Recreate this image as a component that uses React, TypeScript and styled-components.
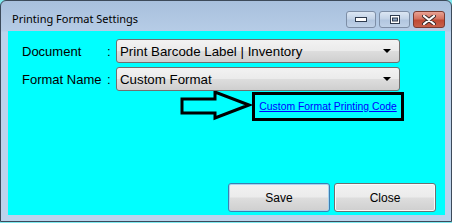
import React from "react";
import styled, { createGlobalStyle } from "styled-components";

const Global = createGlobalStyle`
  html, body { margin: 0; padding: 0; background: #7fe9ef; overflow: hidden; }
  body { width: 452px; height: 223px; }
`;

const Window = styled.div`
  box-sizing: border-box;
  width: 452px;
  height: 222px;
  border: 1px solid #3c4a5a;
  border-radius: 6px 6px 0 0;
  background: linear-gradient(180deg, #a8c0dd 0px, #b6cce6 30px, #bcd3ec 31px, #bcd3ec 100%);
  display: flex;
  flex-direction: column;
  padding: 0 6px 6px 7px;
`;

const TitleBar = styled.div`
  height: 30px;
  display: flex;
  align-items: flex-start;
  justify-content: space-between;
`;

const Title = styled.div`
  font-family: "Noto Sans", sans-serif;
  font-size: 11px;
  color: #000;
  padding: 10px 0 0 4px;
`;

const Controls = styled.div`
  display: flex;
  gap: 3px;
  padding-top: 10px;
`;

const CtlButton = styled.div<{ $w: number; $close?: boolean }>`
  box-sizing: border-box;
  width: ${(p) => p.$w}px;
  height: 17px;
  border: 1px solid ${(p) => (p.$close ? "#7a3a30" : "#7d8ea6")};
  border-radius: 3px;
  background: ${(p) =>
    p.$close
      ? "linear-gradient(180deg, #e8a294 0%, #d4725f 45%, #c04a34 55%, #c7604a 100%)"
      : "linear-gradient(180deg, #dbe6f3 0%, #c3d3e7 45%, #b2c6df 55%, #bfd1e7 100%)"};
  display: flex;
  align-items: center;
  justify-content: center;
`;

const Client = styled.div`
  flex: 1;
  background: #00ffff;
  display: flex;
  flex-direction: column;
  padding: 8px 9px 3px 14px;
  font-family: "Liberation Sans", Arial, sans-serif;
`;

const FormGrid = styled.div`
  display: grid;
  grid-template-columns: 85px 9px 284px;
  row-gap: 4px;
  align-items: center;
`;

const Label = styled.div`
  font-size: 13px;
  color: #000;
`;

const Colon = styled.div`
  font-size: 13px;
  color: #000;
`;

const Combo = styled.div`
  box-sizing: border-box;
  height: 24px;
  border: 1px solid #707070;
  border-radius: 3px;
  background: linear-gradient(180deg, #f2f2f2 0%, #ebebeb 48%, #dddddd 52%, #cfcfcf 100%);
  display: flex;
  align-items: center;
  justify-content: space-between;
  padding: 0 8px 0 3px;
  font-size: 13.3px;
  color: #000;
`;

const Caret = styled.div`
  width: 0;
  height: 0;
  border-left: 4px solid transparent;
  border-right: 4px solid transparent;
  border-top: 4px solid #000;
`;

const LinkRow = styled.div`
  display: flex;
  justify-content: flex-end;
  align-items: center;
  padding-right: 32px;
`;

const LinkBox = styled.div`
  box-sizing: border-box;
  width: 152px;
  height: 29px;
  border: 3px solid #000;
  display: flex;
  align-items: center;
  justify-content: center;
`;

const Link = styled.a`
  font-family: "Liberation Sans", Arial, sans-serif;
  font-size: 10.4px;
  color: #0000ff;
  text-decoration: underline;
  cursor: pointer;
`;

const ButtonRow = styled.div`
  margin-top: auto;
  display: flex;
  justify-content: flex-end;
  gap: 4px;
`;

const Button = styled.button<{ $focus?: boolean }>`
  box-sizing: border-box;
  width: 102px;
  height: 29px;
  border: 1px solid ${(p) => (p.$focus ? "#3c7fb1" : "#707070")};
  box-shadow: ${(p) => (p.$focus ? "inset 0 0 0 1px #a6d3f0" : "inset 0 0 0 1px #fbfbfb")};
  border-radius: 3px;
  background: linear-gradient(180deg, #f2f2f2 0%, #ebebeb 48%, #dddddd 52%, #cfcfcf 100%);
  font-family: "Liberation Sans", Arial, sans-serif;
  font-size: 12px;
  color: #000;
  padding: 0;
`;

const Arrow = () => (
  <svg width="72" height="30" viewBox="0 0 72 30" style={{ display: "block" }}>
    <polygon
      points="2,8 35,8 35,1 69,14 35,27 35,22 2,22"
      fill="none"
      stroke="#000"
      strokeWidth="3"
      strokeLinejoin="miter"
    />
  </svg>
);

export default function App() {
  return (
    <>
      <Global />
      <Window>
        <TitleBar>
          <Title>Printing Format Settings</Title>
          <Controls>
            <CtlButton $w={30}>
              <svg width="12" height="5" viewBox="0 0 12 5">
                <rect x="0.5" y="0.5" width="11" height="4" fill="#fff" stroke="#2f3c4f" />
              </svg>
            </CtlButton>
            <CtlButton $w={31}>
              <svg width="10" height="9" viewBox="0 0 10 9">
                <rect x="0.5" y="0.5" width="9" height="8" fill="#fff" stroke="#2f3c4f" />
                <rect x="2.5" y="3" width="5" height="3" fill="#8aa0bd" stroke="#2f3c4f" strokeWidth="1" />
              </svg>
            </CtlButton>
            <CtlButton $w={32} $close>
              <svg width="14" height="10" viewBox="0 0 14 10">
                <path d="M2 1 L12 9 M12 1 L2 9" stroke="#3a2a2a" strokeWidth="4" strokeLinecap="round" />
                <path d="M2 1 L12 9 M12 1 L2 9" stroke="#fff" strokeWidth="2.2" strokeLinecap="round" />
              </svg>
            </CtlButton>
          </Controls>
        </TitleBar>
        <Client>
          <FormGrid>
            <Label>Document</Label>
            <Colon>:</Colon>
            <Combo>
              <span>Print Barcode Label | Inventory</span>
              <Caret />
            </Combo>
            <Label>Format Name</Label>
            <Colon>:</Colon>
            <Combo>
              <span>Custom Format</span>
              <Caret />
            </Combo>
          </FormGrid>
          <LinkRow>
            <Arrow />
            <LinkBox>
              <Link>Custom Format Printing Code</Link>
            </LinkBox>
          </LinkRow>
          <ButtonRow>
            <Button $focus>Save</Button>
            <Button>Close</Button>
          </ButtonRow>
        </Client>
      </Window>
    </>
  );
}
